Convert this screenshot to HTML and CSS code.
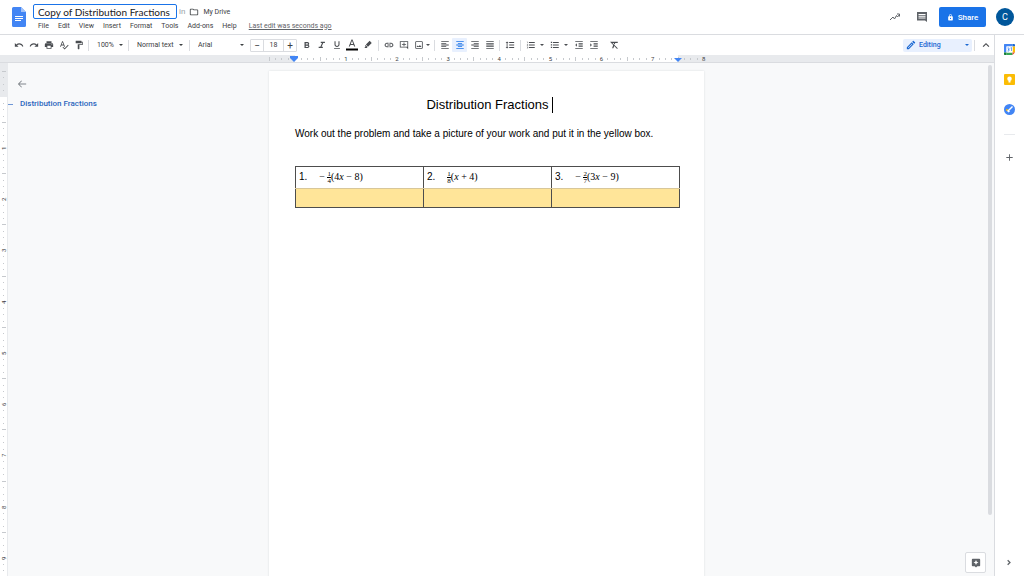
FILE: index.html
```
<!DOCTYPE html>
<html lang="en">
<head>
    <meta charset="UTF-8">
    <meta name="viewport" content="width=device-width, initial-scale=1.0">
    <title>Copy of Distribution Fractions</title>
    <link rel="stylesheet" href="styles.css">
</head>
<body>
    <header class="header">
        <a class="logo" href="#" aria-label="Docs home">
            <svg viewBox="0 0 14 20"><path fill="#4285f4" d="M1.500 0H9l5 5v13.500a1.500 1.500 0 0 1-1.500 1.500h-11A1.500 1.500 0 0 1 0 18.500v-17A1.500 1.500 0 0 1 1.500 0z"/><path fill="#a1c2fa" d="M9 0l5 5H9z"/><path fill="#fff" d="M3 9h8v1H3zM3 11h8v1H3zM3 13h6v1H3z"/></svg>
        </a>
        <div class="heading">
            <div class="title-row">
                <input class="doc-title" type="text" aria-label="Document title" value="Copy of Distribution Fractions">
                <span class="in">in</span>
                <a class="folder" href="#"><svg class="icon" viewBox="0 0 24 24"><path d="M9.170 6l2 2H20v10H4V6h5.170M10 4H4c-1.100 0-2 .9-2 2v12c0 1.100.9 2 2 2h16c1.100 0 2-.9 2-2V8c0-1.100-.9-2-2-2h-8l-2-2z"/></svg>My Drive</a>
            </div>
            <nav class="menus">
                <button>File</button>
                <button>Edit</button>
                <button>View</button>
                <button>Insert</button>
                <button>Format</button>
                <button>Tools</button>
                <button>Add-ons</button>
                <button>Help</button>
                <a class="last-edit" href="#">Last edit was seconds ago</a>
            </nav>
        </div>
        <div class="header-actions">
            <button class="header-btn" aria-label="Activity"><svg class="icon" viewBox="0 0 24 24"><path fill="none" stroke="currentColor" stroke-width="2" d="M2 18l6-6 3 4 4-7 2 3 4-5M16 6h5v5"/></svg></button>
            <button class="header-btn" aria-label="Comments"><svg class="icon" viewBox="0 0 24 24"><path d="M22 2H2v17h16l4 3zM19 15H5v-2h14zm0-3.500H5v-2h14zM19 8H5V6h14z"/></svg></button>
            <button class="share"><svg class="icon" viewBox="0 0 24 24"><path d="M18 8h-1V6c0-2.760-2.240-5-5-5S7 3.240 7 6v2H6c-1.100 0-2 .9-2 2v10c0 1.100.9 2 2 2h12c1.100 0 2-.9 2-2V10c0-1.100-.9-2-2-2zm-6 9c-1.100 0-2-.9-2-2s.9-2 2-2 2 .9 2 2-.9 2-2 2zm3.100-9H8.900V6c0-1.710 1.390-3.100 3.100-3.100 1.710 0 3.100 1.390 3.100 3.100v2z"/></svg>Share</button>
            <button class="avatar" aria-label="Account">C</button>
        </div>
    </header>

    <div class="main">
        <div class="editor">
            <div class="toolbar">
                <button class="tool" aria-label="Undo"><svg class="icon" viewBox="0 0 24 24"><path d="M12.500 8c-2.650 0-5.050.99-6.900 2.600L2 7v9h9l-3.620-3.620c1.390-1.160 3.160-1.880 5.120-1.880 3.540 0 6.550 2.310 7.600 5.500l2.370-.78C21.080 11.030 17.150 8 12.500 8z"/></svg></button>
                <button class="tool" aria-label="Redo"><svg class="icon" viewBox="0 0 24 24"><path d="M18.400 10.600C16.550 8.990 14.150 8 11.500 8c-4.650 0-8.580 3.030-9.960 7.220L3.900 16c1.050-3.190 4.050-5.500 7.600-5.500 1.950 0 3.730.72 5.120 1.880L13 16h9V7l-3.600 3.600z"/></svg></button>
                <button class="tool" aria-label="Print"><svg class="icon" viewBox="0 0 24 24"><path d="M19 8H5c-1.660 0-3 1.340-3 3v6h4v4h12v-4h4v-6c0-1.660-1.340-3-3-3zm-3 11H8v-5h8v5zm3-7c-.55 0-1-.45-1-1s.45-1 1-1 1 .45 1 1-.45 1-1 1zm-1-9H6v4h12V3z"/></svg></button>
                <button class="tool" aria-label="Spelling"><svg class="icon" viewBox="0 0 24 24"><path d="M12.450 16h2.090L9.430 3H7.570L2.460 16h2.090l1.120-3h5.640l1.140 3zm-6.020-5L8.500 5.480 10.570 11H6.430zm15.160.59l-8.090 8.090L9.830 16l-1.410 1.410 5.090 5.090L23 13l-1.410-1.410z"/></svg></button>
                <button class="tool" aria-label="Paint format"><svg class="icon" viewBox="0 0 24 24"><path d="M18 4V3c0-.55-.45-1-1-1H5c-.55 0-1 .45-1 1v4c0 .55.45 1 1 1h12c.55 0 1-.45 1-1V6h1v4H9v11c0 .55.45 1 1 1h2c.55 0 1-.45 1-1v-9h8V4h-3z"/></svg></button>
                <span class="sep"></span>
                <label class="picker zoom"><select aria-label="Zoom"><option>100%</option></select></label>
                <span class="sep"></span>
                <label class="picker"><select aria-label="Styles"><option>Normal text</option></select></label>
                <span class="sep"></span>
                <label class="picker"><select aria-label="Font"><option>Arial</option></select></label>
                <div class="font-size">
                    <button aria-label="Decrease font size">−</button>
                    <input type="text" aria-label="Font size" value="18">
                    <button aria-label="Increase font size">+</button>
                </div>
                <button class="tool" aria-label="Bold"><svg class="icon" viewBox="0 0 24 24"><path d="M15.600 11.790c.97-.67 1.650-1.770 1.650-2.790 0-2.260-1.750-4-4-4H6v14h8.040c2.090 0 3.710-1.700 3.710-3.790 0-1.520-.86-2.820-2.150-3.420zM9 7.500h4c.83 0 1.500.67 1.500 1.500s-.67 1.500-1.500 1.500H9v-3zm4.500 9H9v-3h4.500c.83 0 1.500.67 1.500 1.500s-.67 1.500-1.500 1.500z"/></svg></button>
                <button class="tool" aria-label="Italic"><svg class="icon" viewBox="0 0 24 24"><path d="M9 4v3h3l-4 9H4v3h10v-3h-3l4-9h4V4z"/></svg></button>
                <button class="tool" aria-label="Underline"><svg class="icon" viewBox="0 0 24 24"><path d="M12 17c3.310 0 6-2.690 6-6V3h-2.500v8c0 1.930-1.570 3.500-3.500 3.500S8.500 12.930 8.500 11V3H6v8c0 3.310 2.690 6 6 6zm-7 2v2h14v-2H5z"/></svg></button>
                <button class="tool wide text-color" aria-label="Text color"><svg class="icon" viewBox="0 0 24 24"><path d="M11 1L5.500 15h2.250l1.120-3h6.250l1.120 3h2.250L13 1h-2zm-1.380 9L12 3.670 14.380 10H9.620z"/><path fill="#000" d="M0 19h24v4H0z"/></svg></button>
                <button class="tool wide" aria-label="Highlight color"><svg class="icon" viewBox="0 0 24 24"><path d="M16 2l5 5-9 9-5-5zM6 12l5 5-2 2H3l3-3-1-2z"/></svg></button>
                <span class="sep"></span>
                <button class="tool" aria-label="Insert link"><svg class="icon" viewBox="0 0 24 24"><path d="M3.900 12c0-1.710 1.390-3.100 3.100-3.100h4V6.500H7C4 6.500 1.500 9 1.500 12S4 17.500 7 17.500h4v-2.400H7c-1.710 0-3.100-1.390-3.100-3.100zM8 13h8v-2H8v2zm9-6.500h-4v2.400h4c1.710 0 3.100 1.390 3.100 3.100s-1.390 3.100-3.100 3.100h-4v2.400h4c3 0 5.500-2.500 5.500-5.500S20 6.500 17 6.500z"/></svg></button>
                <button class="tool" aria-label="Add comment"><svg class="icon" viewBox="0 0 24 24"><path d="M2 3h20v19l-4-4H2zm2 2v11h16V5zm7 1h2v4h4v2h-4v3h-2v-3H7v-2h4z"/></svg></button>
                <button class="tool image-menu" aria-label="Insert image"><svg class="icon" viewBox="0 0 24 24"><path d="M19 5v14H5V5h14m0-2H5c-1.100 0-2 .9-2 2v14c0 1.100.9 2 2 2h14c1.100 0 2-.9 2-2V5c0-1.100-.9-2-2-2zm-4.860 8.860l-3 3.870L9 13.140 6 17h12l-3.860-5.140z"/></svg><span class="caret"></span></button>
                <span class="sep"></span>
                <button class="tool" aria-label="Left align"><svg class="icon" viewBox="0 0 24 24"><path d="M15 15H3v2h12v-2zm0-8H3v2h12V7zM3 13h18v-2H3v2zm0 8h18v-2H3v2zM3 3v2h18V3H3z"/></svg></button>
                <button class="tool active" aria-label="Center align"><svg class="icon" viewBox="0 0 24 24"><path d="M7 15v2h10v-2H7zm-4 6h18v-2H3v2zm0-8h18v-2H3v2zm4-6v2h10V7H7zM3 3v2h18V3H3z"/></svg></button>
                <button class="tool" aria-label="Right align"><svg class="icon" viewBox="0 0 24 24"><path d="M3 21h18v-2H3v2zm6-4h12v-2H9v2zm-6-4h18v-2H3v2zm6-4h12V7H9v2zM3 3v2h18V3H3z"/></svg></button>
                <button class="tool" aria-label="Justify"><svg class="icon" viewBox="0 0 24 24"><path d="M3 21h18v-2H3v2zm0-4h18v-2H3v2zm0-4h18v-2H3v2zm0-4h18V7H3v2zm0-6v2h18V3H3z"/></svg></button>
                <span class="sep"></span>
                <button class="tool wide" aria-label="Line spacing"><svg class="icon" viewBox="0 0 24 24"><path d="M6 7h2.500L5 3.500 1.500 7H4v10H1.500L5 20.500 8.500 17H6V7zm4-2v2h12V5H10zm0 14h12v-2H10v2zm0-6h12v-2H10v2z"/></svg></button>
                <span class="sep"></span>
                <button class="tool list-menu" aria-label="Numbered list"><svg class="icon" viewBox="0 0 24 24"><path d="M2 17h2v.5H3v1h1v.5H2v1h3v-4H2v1zm1-9h1V4H2v1h1v3zm-1 3h1.800L2 13.100v.9h3v-1H3.200L5 10.900V10H2v1zm5-6v2h14V5H7zm0 14h14v-2H7v2zm0-6h14v-2H7v2z"/></svg><span class="caret"></span></button>
                <button class="tool list-menu" aria-label="Bulleted list"><svg class="icon" viewBox="0 0 24 24"><path d="M2 4h3v3H2zM2 10h3v3H2zM2 16h3v3H2zM7 19h14v-2H7v2zm0-6h14v-2H7v2zm0-8v2h14V5H7z"/></svg><span class="caret"></span></button>
                <button class="tool" aria-label="Decrease indent"><svg class="icon" viewBox="0 0 24 24"><path d="M11 17h10v-2H11v2zm-8-5l4 4V8l-4 4zm0 9h18v-2H3v2zM3 3v2h18V3H3zm8 6h10V7H11v2zm0 4h10v-2H11v2z"/></svg></button>
                <button class="tool" aria-label="Increase indent"><svg class="icon" viewBox="0 0 24 24"><path d="M3 21h18v-2H3v2zM3 8v8l4-4-4-4zm8 9h10v-2H11v2zM3 3v2h18V3H3zm8 6h10V7H11v2zm0 4h10v-2H11v2z"/></svg></button>
                <button class="tool clear" aria-label="Clear formatting"><svg class="icon" viewBox="0 0 24 24"><path d="M4 4h17v3h-6l-1.500 4-2-2 .7-2H8zM3 5l1.500-1.500L21 20l-1.500 1.500-7-7L10.500 20h-3L10 12z"/></svg></button>
                <label class="picker mode"><svg class="icon" viewBox="0 0 24 24"><path d="M14.060 9.020l.92.92L5.920 19H5v-.92l9.060-9.060M17.660 2c-.25 0-.51.1-.7.290l-2.200 2.200 4.750 4.750 2.200-2.200c.39-.39.39-1.020 0-1.410l-3.340-3.340c-.2-.2-.45-.29-.71-.29zm-3.900 3.500L2 17.250V22h4.750L18.500 10.240z"/></svg><select aria-label="Mode"><option>Editing</option></select></label>
                <span class="sep"></span>
                <button class="tool collapse" aria-label="Hide the menus"><svg class="icon" viewBox="0 0 24 24"><path d="M12 7l-8 8 2 2 6-6 6 6 2-2z"/></svg></button>
            </div>

            <div class="ruler">
                <div class="ruler-track">
                    <span class="text-width"></span>
                    <ol class="marks" data-from="-4" data-count="69"></ol>
                    <svg class="indent left" viewBox="0 0 8 7"><path d="M0 1h8v2L4 7 0 3z"/></svg>
                    <svg class="indent right" viewBox="0 0 8 7"><path d="M0 3h8L4 7z"/></svg>
                </div>
            </div>

            <div class="workspace">
                <div class="side-ruler">
                    <ol class="marks vertical" data-from="-4" data-count="80"></ol>
                </div>
                <div class="canvas">
                    <aside class="outline">
                        <button class="back" aria-label="Close outline"><svg class="icon" viewBox="0 0 24 24"><path d="M22 11H6l6-6-1.500-1.500L2 12l8.500 8.500L12 19l-6-6h16z"/></svg></button>
                        <a href="#heading">Distribution Fractions</a>
                    </aside>
                    <main class="page">
                        <h1 id="heading">Distribution Fractions <span class="cursor"></span></h1>
                        <p>Work out the problem and take a picture of your work and put it in the yellow box.</p>
                        <table>
                            <tr class="problems">
                                <td>1.<span class="math">− <span class="frac"><span>1</span><span>4</span></span>(4<i>x</i> − 8)</span></td>
                                <td>2.<span class="math"><span class="frac"><span>1</span><span>8</span></span>(<i>x</i> + 4)</span></td>
                                <td>3.<span class="math">− <span class="frac"><span>2</span><span>7</span></span>(3<i>x</i> − 9)</span></td>
                            </tr>
                            <tr class="answers"><td></td><td></td><td></td></tr>
                        </table>
                    </main>
                    <div class="scroll"><div class="thumb"></div></div>
                </div>
                <button class="explore" aria-label="Explore"><svg class="icon" viewBox="0 0 24 24"><path d="M20 2H4c-1 0-2 1-2 2v14c0 1 1 2 2 2h5l3 3 3-3h5c1 0 2-1 2-2V4c0-1-1-2-2-2zm-6.120 10.880L12 17l-1.880-4.120L6 11l4.120-1.880L12 5l1.880 4.120L18 11z"/></svg></button>
            </div>
        </div>

        <aside class="rail">
            <button aria-label="Calendar"><svg viewBox="0 0 22 22"><path fill="#4285f4" d="M1 0h16v5H5v12H0V1z"/><path fill="#1967d2" d="M17 0h4l1 1v4h-5z"/><path fill="#fbbc04" d="M17 5h5v12h-5z"/><path fill="#34a853" d="M5 17h12v5H5z"/><path fill="#188038" d="M0 17h5v5H1l-1-1z"/><path fill="#ea4335" d="M17 17h5l-5 5z"/><path fill="#fff" d="M5 5h12v12H5z"/><path fill="none" stroke="#4285f4" stroke-width="1.500" d="M7 8h3v3H8h2v3H7M13 8l2-1v7"/></svg></button>
            <button aria-label="Keep"><svg viewBox="0 0 22 22"><rect width="22" height="22" rx="2" fill="#fbbc04"/><circle cx="11" cy="9.500" r="4.500" fill="#fff"/><path fill="#fff" d="M9 13h4v4H9z"/></svg></button>
            <button aria-label="Tasks"><svg viewBox="0 0 22 22"><circle cx="11" cy="11" r="11" fill="#4285f4"/><path fill="none" stroke="#fff" stroke-width="3" d="M8 14l9-9"/><circle cx="6" cy="12" r="2" fill="#fbbc04"/><path fill="#fff" d="M8 12l4 3-3 2-3-3z"/></svg></button>
            <hr>
            <button class="add" aria-label="Get add-ons"><svg class="icon" viewBox="0 0 24 24"><path d="M11 5h2v6h6v2h-6v6h-2v-6H5v-2h6z"/></svg></button>
            <button class="hide" aria-label="Hide side panel"><svg class="icon" viewBox="0 0 24 24"><path d="M9 6l6 6-6 6-2-2 4-4-4-4z"/></svg></button>
        </aside>
    </div>
    <script src="script.js"></script>
</body>
</html>
```
FILE: styles.css
```
* {
    box-sizing: border-box;
}
body {
    margin: 0;
    height: 100vh;
    display: flex;
    flex-direction: column;
    overflow: hidden;
    font-family: Roboto, sans-serif;
    font-size: 7px;
    color: #3c4043;
    background-color: #fff;
}
button, input, select {
    font: inherit;
    color: inherit;
    border: 0;
    padding: 0;
    margin: 0;
    background: none;
    outline: none;
    appearance: none;
}
button {
    display: flex;
    align-items: center;
    justify-content: center;
}
svg {
    display: block;
}
.icon {
    width: 10px;
    height: 10px;
    fill: currentColor;
}

/* header */
.header {
    display: flex;
    height: 35px;
    flex-shrink: 0;
    padding-right: 10px;
    border-bottom: 1px solid #dadce0;
}
.logo {
    padding: 7px 7px 0 12px;
}
.logo svg {
    width: 14px;
    height: 20px;
}
.heading {
    padding-top: 4px;
}
.title-row {
    display: flex;
    align-items: center;
    height: 15px;
}
.doc-title {
    width: 144px;
    height: 15px;
    padding: 0 4px;
    border: 1px solid #1a73e8;
    border-radius: 2px;
    font-family: "Product Sans", Lato, sans-serif;
    font-size: 10px;
    color: #202124;
}
.in {
    margin: 0 4px 0 2px;
    font-size: 8px;
    color: #9aa0a6;
}
.folder {
    display: flex;
    align-items: center;
    gap: 4px;
    color: #3c4043;
    text-decoration: none;
}
.menus {
    display: flex;
    align-items: center;
    height: 13px;
    gap: 9px;
    padding-left: 5px;
}
.last-edit {
    margin-left: 3px;
    color: #5f6368;
}
.header-actions {
    display: flex;
    align-items: center;
    margin-left: auto;
}
.header-btn {
    width: 27px;
    height: 20px;
    color: #5f6368;
}
.header-btn .icon {
    width: 12px;
    height: 12px;
}
.share {
    width: 47px;
    height: 20px;
    margin: 0 10px 0 4px;
    gap: 4px;
    border-radius: 2px;
    background-color: #1a73e8;
    color: #fff;
    font-size: 8px;
    font-weight: 500;
}
.share .icon {
    width: 7px;
    height: 7px;
}
.avatar {
    width: 18px;
    height: 18px;
    border-radius: 50%;
    background-color: #01579b;
    color: #fff;
    font-size: 9px;
}

.main {
    display: flex;
    flex: 1;
    min-height: 0;
}
.editor {
    display: flex;
    flex-direction: column;
    flex: 1;
    min-width: 0;
}

/* toolbar */
.toolbar {
    display: flex;
    align-items: center;
    height: 20px;
    flex-shrink: 0;
    padding-left: 11px;
}
.tool {
    width: 15px;
    height: 14px;
    flex-shrink: 0;
    color: #4a4d51;
}
.wide {
    width: 16px;
}
.text-color .icon {
    width: 12px;
    height: 12px;
}
.image-menu {
    width: 21px;
    gap: 2px;
}
.list-menu {
    width: 24px;
    gap: 4px;
}
.active {
    border-radius: 1px;
    background-color: #e8f0fe;
    color: #1a73e8;
}
.clear {
    margin-left: 5px;
}
.sep {
    width: 1px;
    height: 11px;
    margin: 0 2px;
    flex-shrink: 0;
    background-color: #dadce0;
}
.caret, .picker::after {
    content: "";
    border: 2px solid transparent;
    border-top-color: currentColor;
    border-bottom: 0;
}
.picker {
    display: flex;
    align-items: center;
    width: 56px;
    height: 13px;
    padding: 0 4px 0 6px;
}
.picker select {
    flex: 1;
    min-width: 0;
}
.zoom {
    width: 35px;
    padding-right: 3px;
}
.font-size {
    display: flex;
    width: 47px;
    height: 13px;
    margin: 0 2px;
    border: 1px solid #dadce0;
    border-radius: 1px;
}
.font-size button {
    width: 12px;
    font-size: 10px;
}
.font-size input {
    flex: 1;
    min-width: 0;
    text-align: center;
    border: solid #dadce0;
    border-width: 0 1px;
}
.mode {
    width: 69px;
    margin-left: auto;
    padding: 0 3px;
    gap: 3px;
    border-radius: 2px;
    background-color: #e8f0fe;
    color: #1967d2;
    font-weight: 500;
}
.collapse {
    width: 17px;
}

/* rulers */
.ruler {
    display: grid;
    grid-template-columns: minmax(100px, 261fr) 435px minmax(0, 290fr);
    height: 8px;
    flex-shrink: 0;
    padding-left: 8px;
    background-color: #e8eaed;
    border-bottom: 1px solid #dadce0;
}
.ruler-track {
    position: relative;
    grid-column: 2;
}
.text-width {
    display: block;
    height: 7px;
    margin: 0 26px;
    background-color: #fff;
}
.marks {
    position: absolute;
    top: 0;
    left: -3px;
    right: -3px;
    height: 7px;
    display: flex;
    margin: 0;
    padding: 0;
    list-style: none;
    font-size: 6px;
    line-height: 7px;
}
.marks li {
    flex: 1;
    min-width: 0;
    min-height: 0;
    display: flex;
    align-items: center;
    justify-content: center;
}
.eighth::before, .half::before {
    content: "";
    width: 1px;
    height: 2px;
    background-color: #c6c9cd;
}
.half::before {
    height: 4px;
}
.indent {
    position: absolute;
    top: 0;
    width: 8px;
    height: 7px;
    fill: #4285f4;
}
.left {
    left: 21px;
}
.right {
    right: 22px;
}
.workspace {
    position: relative;
    display: flex;
    flex: 1;
    min-height: 0;
}
.side-ruler {
    width: 8px;
    flex-shrink: 0;
    padding-top: 5px;
    border-right: 1px solid #e8eaed;
    background: linear-gradient(#e8eaed 34px, #fff 34px);
    overflow: hidden;
}
.vertical {
    position: static;
    flex-direction: column;
    width: 7px;
    height: 512px;
}
.vertical .inch {
    transform: rotate(-90deg);
}
.vertical .eighth::before {
    width: 1px;
    height: 1px;
}
.vertical .half::before {
    width: 4px;
    height: 1px;
}

/* document */
.canvas {
    display: grid;
    grid-template-columns: minmax(100px, 261fr) 435px minmax(0, 290fr);
    flex: 1;
    min-width: 0;
    background-color: #f8f9fa;
    overflow: hidden;
}
.outline {
    padding-top: 16px;
    font-size: 8px;
    font-weight: 500;
}
.back {
    margin: 0 0 8px 9px;
    color: #80868b;
}
.back .icon {
    width: 10px;
    height: 10px;
}
.outline a {
    display: flex;
    align-items: center;
    gap: 7px;
    line-height: 14px;
    color: #2a66bd;
    text-decoration: none;
}
.outline a::before {
    content: "";
    width: 5px;
    height: 1px;
    background-color: #6f97d6;
}
.page {
    min-height: 563px;
    margin-top: 8px;
    padding: 26px 24px 26px 26px;
    background-color: #fff;
    box-shadow: 0 0 2px #dadce0;
    font-family: Arial, "Liberation Sans", sans-serif;
    font-size: 10px;
    color: #000;
}
.page h1 {
    display: flex;
    justify-content: center;
    gap: 3px;
    margin: 0 0 13px;
    padding-left: 4px;
    font-size: 13px;
    font-weight: 400;
    line-height: 16px;
}
.cursor {
    width: 1px;
    background-color: #000;
}
.page p {
    margin: 0 0 25px;
    line-height: 15px;
}
.page table {
    width: 100%;
    table-layout: fixed;
    border-collapse: collapse;
}
.page td {
    height: 22px;
    padding: 0 3px;
    border: 1px solid #4d4d4d;
    white-space: nowrap;
}
.page .problems td {
    border-bottom-color: #d8c79a;
}
.page .answers td {
    height: 19px;
    background-color: #ffe599;
    border-top-color: #d8c79a;
}
.math {
    margin-left: 12px;
    font-family: "Times New Roman", "Liberation Serif", serif;
}
.frac {
    display: inline-flex;
    flex-direction: column;
    vertical-align: middle;
    font-size: 7px;
    line-height: 6px;
    text-align: center;
}
.frac span + span {
    border-top: 1px solid #000;
}
.scroll {
    display: flex;
    justify-content: flex-end;
    padding: 2px 2px 0 0;
}
.thumb {
    width: 4px;
    height: 79%;
    border-radius: 2px;
    background-color: #dadce0;
}
.explore {
    position: absolute;
    right: 8px;
    bottom: 3px;
    width: 21px;
    height: 21px;
    border: 1px solid #dadce0;
    border-radius: 2px;
    background-color: #fff;
    color: #5f6368;
}

/* side panel */
.rail {
    display: flex;
    flex-direction: column;
    align-items: center;
    width: 30px;
    flex-shrink: 0;
    padding: 9px 0 8px;
    border-left: 1px solid #dadce0;
    color: #5f6368;
}
.rail button {
    height: 11px;
    margin-bottom: 19px;
}
.rail button > svg {
    width: 11px;
    height: 11px;
}
.rail hr {
    width: 11px;
    height: 1px;
    margin: 0 0 17px;
    border: 0;
    background-color: #e8eaed;
}
.rail .hide {
    margin: auto 0 0;
}
```
FILE: script.js
```
// Fill each ruler with eighth-inch marks and a number on every inch
document.querySelectorAll('.marks').forEach(function (ruler) {
    const from = Number(ruler.dataset.from);
    const count = Number(ruler.dataset.count);

    for (let i = from; i < from + count; i++) {
        const mark = document.createElement('li');
        if (i % 8 === 0) {
            mark.className = 'inch';
            mark.textContent = i === 0 ? '' : i / 8;
        } else {
            mark.className = i % 4 === 0 ? 'half' : 'eighth';
        }
        ruler.appendChild(mark);
    }
});
```
